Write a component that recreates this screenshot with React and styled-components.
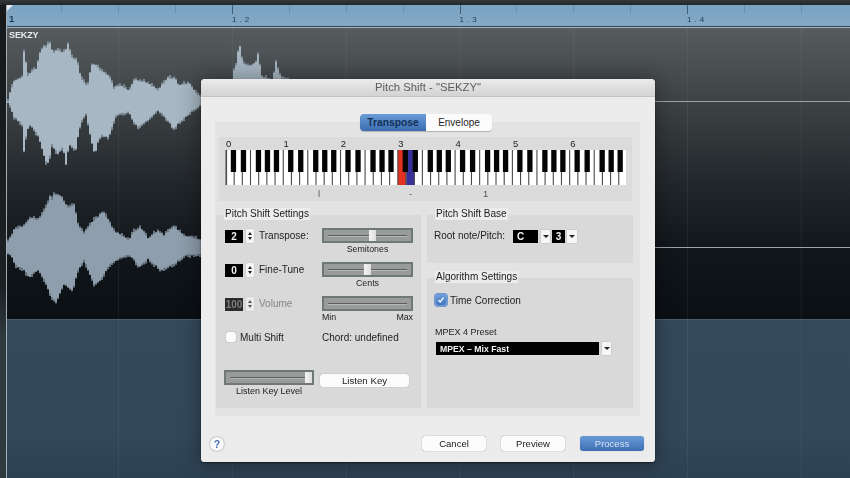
import React from "react";
import styled, { createGlobalStyle } from "styled-components";

const Global = createGlobalStyle`
  html, body { margin: 0; padding: 0; background: #1a1f22; overflow: hidden; }
  body { font-family: "Liberation Sans", Arial, sans-serif; }
  * { box-sizing: border-box; }
`;

const Page = styled.div`
  position: relative; width: 850px; height: 478px; overflow: hidden;
  display: flex; flex-direction: column; filter: blur(0.3px);
`;
const TopStrip = styled.div`height: 5px; flex: none; background: linear-gradient(#33383b, #22272a);`;
const Workspace = styled.div`flex: 1; display: flex; min-height: 0;`;
const Gutter = styled.div`width: 6px; flex: none; background: linear-gradient(#17191b 0, #1c2124 60%, #2e3a3e 70%, #2e3a3e 100%);`;
const Main = styled.div`flex: 1; display: flex; flex-direction: column; border-left: 1px solid #a4adb3; min-width: 0;`;
const Ruler = styled.div`
  height: 22px; flex: none; display: flex; overflow: hidden; position: relative;
  background: linear-gradient(#7aa2c1, #83a9c6); border-bottom: 1px solid #2c465a;
`;
const Notch = styled.i`
  position: absolute; left: 0; top: 0; width: 0; height: 0;
  border-top: 6px solid #e6edf2; border-right: 6px solid transparent;
`;
const RulerCell = styled.div`
  flex: none; width: ${p => p.$w || 56.9}px; display: flex; flex-direction: column; align-items: flex-start;
  &::before {
    content: ""; display: block; width: 1px; height: ${p => (p.$major ? 9 : 8)}px;
    background: ${p => (p.$major ? "#3d5f78" : p.$first ? "transparent" : "#6b8fab")};
  }
`;
const RulerLabel = styled.span`
  line-height: 10px; margin-top: 1px; color: #1d3a52; white-space: pre;
  font-size: ${p => (p.$bold ? 9.5 : 8)}px;
  font-weight: ${p => (p.$bold ? 700 : 400)};
  margin-left: ${p => (p.$bold ? 2 : 0)}px;
  letter-spacing: .4px;
`;
const grid = `linear-gradient(90deg, rgba(255,255,255,.05) 1px, transparent 1px) 111px 0 / 113.8px 100% repeat-x`;
const WaveLane = styled.div`
  height: 292px; flex: none; position: relative; border-top: 1px solid #aeb4b8;
  background: ${grid}, linear-gradient(#565b5e 0%, #3e4346 25%, #23282c 52%, #12171b 75%, #0a0f14 100%);
`;
const ClipName = styled.span`
  position: absolute; left: 2px; top: 1px; font-size: 9px; font-weight: 700; line-height: 12px;
  color: #e8ecee; letter-spacing: -.1px;
`;
const WaveSvg = styled.svg`display: block; width: 843px; height: 291px;`;
const EmptyLane = styled.div`
  flex: 1; border-top: 1px solid #4c5e6c;
  background: ${grid}, linear-gradient(#344a5b, #33495a 70%, #2c4152);
`;

/* dialog */
const Dialog = styled.div`
  position: absolute; left: 201px; top: 79px; width: 454px; height: 383px;
  background: #ececec; border-radius: 4px 4px 3px 3px; display: flex; flex-direction: column;
  box-shadow: 0 0 22px 2px rgba(0,0,0,.32), 0 1px 2px rgba(0,0,0,.5);
  color: #222;
`;
const TitleBar = styled.div`
  height: 18px; flex: none; display: flex; align-items: center; justify-content: center;
  background: linear-gradient(#ebebeb, #d3d3d3); border-bottom: 1px solid #c4c4c4;
  border-radius: 4px 4px 0 0; font-size: 11.3px; color: #5c5c5c; padding-bottom: 1px;
`;
const Content = styled.div`flex: 1; display: flex; flex-direction: column; padding: 17px 11px 0 14px;`;
const Tabs = styled.div`
  display: flex; height: 17px; margin-left: 145px; margin-bottom: -9px; position: relative; z-index: 1;
  width: 132px; border-radius: 4px; box-shadow: 0 1px 1px rgba(0,0,0,.22);
`;
const Tab = styled.div`
  width: 66px; display: flex; align-items: center; justify-content: center;
  font-size: ${p => (p.$active ? 10.3 : 10)}px;
  font-weight: ${p => (p.$active ? 700 : 400)};
  color: ${p => (p.$active ? "#123058" : "#1f1f1f")};
  background: ${p => (p.$active ? "linear-gradient(#6b9bd8,#3a6cae)" : "#fbfbfb")};
  border-radius: ${p => (p.$active ? "4px 0 0 4px" : "0 4px 4px 0")};
`;
const Frame = styled.div`
  width: 425px; height: 294px; background: #e3e3e3; padding: 15px 7px 8px 1px;
  display: flex; flex-direction: column;
`;
const KeyPanel = styled.div`
  height: 64px; width: 413px; margin-left: 3px; background: #dbdbdb; padding-left: 6px; flex: none;
`;
const OctaveRow = styled.div`display: flex; height: 13px; padding-left: 1px; padding-top: 1px;`;
const Octave = styled.span`width: 57.4px; flex: none; font-size: 9.5px; line-height: 11px; color: #222;`;
const KeySvg = styled.svg`display: block; width: 402px; height: 35px;`;
const MarkRow = styled.div`display: flex; padding-left: 93px; height: 16px; align-items: center;`;
const Mark = styled.span`width: ${p => p.$w}px; flex: none; font-size: 9.5px; color: #555;`;

const Columns = styled.div`display: flex; gap: 6px; margin-top: 14px; flex: 1; min-height: 0;`;
const Panel = styled.section`
  background: #d9d9d9; display: flex; flex-direction: column; width: ${p => p.$w || 206}px;
  flex: ${p => (p.$grow ? 1 : "none")}; height: ${p => (p.$h ? p.$h + "px" : "auto")};
`;
const Stack = styled.div`display: flex; flex-direction: column; gap: 15px; width: 206px;`;
const Legend = styled.div`
  align-self: flex-start; margin: -7px 0 0 8px; height: 12px; line-height: 12px; padding: 0 1px;
  background: #ececec; font-size: 10px; color: #1b1b1b; white-space: nowrap;
`;
const ControlRow = styled.div`
  display: flex; align-items: flex-start; height: 34px; padding-left: 9px; flex: none;
  margin-top: ${p => p.$mt || 0}px;
`;
const Value = styled.div`
  width: ${p => p.$w}px; height: 13px; flex: none; background: ${p => (p.$dim ? "#2b2b2b" : "#000")};
  color: ${p => (p.$dim ? "#7d7d7d" : "#f2f2f2")}; font-size: ${p => p.$fs || 10}px; font-weight: 700;
  display: flex; align-items: center; justify-content: ${p => (p.$left ? "flex-start" : "center")};
  padding-left: ${p => (p.$left ? 4 : 0)}px; margin: 2px 0 0 ${p => p.$ml || 0}px;
  white-space: nowrap;
`;
const Stepper = styled.div`
  width: 8px; height: 14px; margin: 1px 0 0 3px; flex: none; background: #f4f4f4; border-radius: 1px;
  display: flex; flex-direction: column; align-items: center; justify-content: space-around;
  box-shadow: 0 0 1px rgba(0,0,0,.35); padding: 2px 0; opacity: ${p => (p.$dim ? .7 : 1)};
`;
const Caret = styled.i`
  width: 0; height: 0; display: block;
  border-left: ${p => (p.$big ? 3 : 2.5)}px solid transparent; border-right: ${p => (p.$big ? 3 : 2.5)}px solid transparent;
  ${p => (p.$up ? "border-bottom: 3px solid #222;" : "border-top: 3px solid #222;")}
`;
const DropArrow = styled.div`
  width: ${p => p.$w}px; height: 13px; margin: 2px 0 0 ${p => p.$ml}px; flex: none; background: #f6f6f6;
  display: flex; align-items: center; justify-content: center; box-shadow: 0 0 1px rgba(0,0,0,.3);
`;
const RowLabel = styled.span`
  width: ${p => p.$w}px; margin-left: ${p => p.$ml || 0}px; flex: none; font-size: 10px; line-height: 15px; white-space: nowrap;
  color: ${p => (p.$dim ? "#858585" : "#222")};
`;
const SliderBlock = styled.div`width: ${p => p.$w}px; flex: none; display: flex; flex-direction: column;`;
const SliderTrack = styled.div`
  position: relative; height: 15px; border: 2px solid #6f7879; background: #9a9c9c;
  &::after { content: ""; position: absolute; left: 4px; right: 4px; top: 5px; height: 1px; background: #5c5f5f; box-shadow: 0 1px 0 #b6b8b8; }
`;
const Thumb = styled.div`
  position: absolute; z-index: 1; left: ${p => p.$left}px; top: 0; width: 7px; height: 11px;
  background: linear-gradient(90deg, #f4f4f4, #dedede);
`;
const Caption = styled.div`font-size: ${p => p.$fs || 8.8}px; line-height: 12px; text-align: center; color: #222; white-space: nowrap;`;
const MinMax = styled.div`display: flex; justify-content: space-between; font-size: 8.8px; line-height: 12px; color: #222;`;
const CheckRow = styled.div`
  display: flex; align-items: center; height: 12px; flex: none; margin-top: ${p => p.$mt}px; padding-left: ${p => p.$pl}px;
`;
const Check = styled.div`
  width: 10px; height: 10px; flex: none; border-radius: 2px;
  background: ${p => (p.$on ? "linear-gradient(#6b9bdc,#3f74bd)" : "#fbfbfb")};
  box-shadow: ${p => (p.$on ? "0 0 0 2px #6f97d0" : "0 0 1px rgba(0,0,0,.5)")};
  display: flex; align-items: center; justify-content: center;
`;
const ListenRow = styled.div`display: flex; align-items: flex-start; margin-top: 27px; padding-left: 8px;`;
const ListenButton = styled.div`
  width: 89px; height: 13px; margin: 4px 0 0 6px; background: #fbfbfb; border-radius: 3px; flex: none;
  font-size: 9.7px; line-height: 13px; text-align: center; color: #222; box-shadow: 0 0 1px rgba(0,0,0,.4);
`;
const RootRow = styled.div`display: flex; align-items: flex-start; padding: 8px 0 0 7px; height: 36px;`;
const PresetLabel = styled.div`font-size: 9px; line-height: 12px; margin: 20px 0 2px 8px; color: #222;`;
const PresetRow = styled.div`display: flex; padding-left: 9px;`;
const Footer = styled.div`display: flex; align-items: flex-start; margin: 20px 0 0 -5px; flex: none;`;
const Help = styled.div`
  width: 14px; height: 14px; border-radius: 50%; background: #fbfbfb; box-shadow: 0 0 1.5px rgba(0,0,0,.55);
  color: #4a6fb0; font-size: 10.5px; font-weight: 700; line-height: 14px; text-align: center; margin-top: 1px;
`;
const Buttons = styled.div`margin-left: auto; display: flex; gap: 15px;`;
const Button = styled.div`
  width: 64px; height: 15px; border-radius: 3px; font-size: 9.5px; line-height: 15px; text-align: center;
  color: ${p => (p.$primary ? "#d6e2f1" : "#222")};
  background: ${p => (p.$primary ? "linear-gradient(#6a9ad8,#3e6fb2)" : "#fbfbfb")};
  box-shadow: ${p => (p.$primary ? "0 0 1px rgba(0,0,0,.3)" : "0 0 1px rgba(0,0,0,.6)")};
`;

/* waveform data (page coordinates) */
const env = {
  t1: [[7,98],[8,92],[13,78],[20,75],[22,72],[23,49],[25,60],[26,73],[32,67],[36,65],[38,52],[43,43],[46,45],[48,37],[50,44],[52,50],[57,47],[62,50],[65,47],[66,38],[69,48],[72,57],[76,57],[80,75],[86,83],[88,78],[90,62],[95,62],[100,68],[108,73],[113,85],[120,82],[128,88],[133,77],[140,78],[147,80],[157,87],[167,75],[173,75],[178,82],[188,80],[197,92],[200,93],[230,90],[232,84],[233,67],[236,60],[238,37],[240,50],[242,60],[250,63],[255,58],[257,52],[259,62],[260,73],[271,78],[273,70],[275,59],[277,66],[280,75],[292,78],[305,85]],
  b1: [[7,104],[8,106],[13,120],[20,126],[22,130],[23,155],[25,140],[28,127],[37,138],[45,165],[48,165],[51,148],[57,157],[62,150],[65,167],[68,148],[75,152],[77,140],[80,125],[85,117],[90,142],[94,158],[97,145],[100,138],[108,140],[115,118],[128,115],[133,125],[137,130],[147,123],[157,113],[167,123],[172,132],[182,122],[192,113],[200,108],[305,108]],
  t2: [[7,238],[11,232],[13,227],[23,223],[30,215],[38,217],[43,208],[47,200],[48,188],[50,198],[53,192],[60,193],[67,205],[73,202],[78,225],[83,230],[92,218],[99,212],[102,208],[108,218],[113,228],[128,237],[133,228],[140,225],[147,235],[157,228],[163,232],[173,223],[182,232],[200,237],[305,237]],
  b2: [[7,256],[11,260],[14,268],[23,273],[28,280],[37,273],[43,282],[50,300],[55,305],[63,287],[72,293],[77,273],[83,263],[93,287],[100,283],[108,268],[120,260],[130,258],[138,270],[147,262],[160,273],[173,267],[185,258],[200,258],[305,258]]
};
const lerp = (pts, x) => {
  for (let i = 1; i < pts.length; i++) {
    if (x <= pts[i][0]) {
      const [a, b] = [pts[i - 1], pts[i]];
      return a[1] + ((b[1] - a[1]) * (x - a[0])) / (b[0] - a[0] || 1);
    }
  }
  return pts[pts.length - 1][1];
};
const rnd = x => { const v = Math.sin(x * 12.9898) * 43758.5453; return v - Math.floor(v); };
const wavePath = (top, bot, inset, jitter, seed) => {
  const up = [], down = [];
  for (let x = 7; x <= 302; x += 2) {
    const r = jitter * rnd(x + seed);
    const r2 = jitter * rnd(x + seed + 77);
    const t = lerp(top, x) + inset + r;
    const b = Math.max(t + 1, lerp(bot, x) - inset - r2);
    up.push(`L${x} ${t.toFixed(1)}L${x + 2} ${t.toFixed(1)}`);
    down.unshift(`L${x + 2} ${b.toFixed(1)}L${x} ${b.toFixed(1)}`);
  }
  return "M" + up.join("").slice(1) + down.join("") + "Z";
};

function Waveform() {
  return (
    <WaveSvg viewBox="7 28 843 291">
      <line x1="7" x2="850" y1="101.5" y2="101.5" stroke="#9ea3a6" />
      <line x1="7" x2="850" y1="247.5" y2="247.5" stroke="#9ca4a9" />
      <path d={wavePath(env.t1, env.b1, 0, 3, 1)} fill="#8a9aa7" opacity=".8" />
      <path d={wavePath(env.t1, env.b1, 2.5, 1.5, 9)} fill="#a7b7c3" />
      <path d={wavePath(env.t2, env.b2, 0, 3, 31)} fill="#7d8c9a" opacity=".8" />
      <path d={wavePath(env.t2, env.b2, 2.5, 1.5, 45)} fill="#8e9eac" />
    </WaveSvg>
  );
}

const KEY_W = 401 / 49;
const BLACK_OFFSETS = [5.8, 15.8, 30.8, 39.8, 48.8];

function Keyboard() {
  const lines = Array.from({ length: 49 }, (_, i) => i);
  const blacks = [];
  for (let o = 0; o < 7; o++) BLACK_OFFSETS.forEach(f => blacks.push(o * 7 * KEY_W + f));
  return (
    <KeySvg viewBox="0 0 402 35">
      <rect x="0" y="0" width="401" height="35" fill="#fff" />
      <rect x={173} y="0" width="8.4" height="35" fill="#e4301f" />
      <rect x={181.3} y="0" width="8.6" height="35" fill="#38309a" />
      {lines.map(i => (
        <rect key={i} x={i * KEY_W + 0.4} y="0" width={i === 0 ? 1.7 : 1.1} height="35" fill="#4a4a4a" />
      ))}
      {blacks.map((x, i) => (
        <rect key={i} x={x} y="0" width="5.3" height="22" fill="#050505" />
      ))}
    </KeySvg>
  );
}

export default function App() {
  return (
    <Page>
      <Global />
      <TopStrip />
      <Workspace>
        <Gutter />
        <Main>
          <Ruler>
            <Notch />
            <RulerCell $w={54.3} $first><RulerLabel $bold>1</RulerLabel></RulerCell>
            <RulerCell />
            <RulerCell />
            <RulerCell />
            <RulerCell $major><RulerLabel>1 . 2</RulerLabel></RulerCell>
            <RulerCell />
            <RulerCell />
            <RulerCell />
            <RulerCell $major><RulerLabel>1 . 3</RulerLabel></RulerCell>
            <RulerCell />
            <RulerCell />
            <RulerCell />
            <RulerCell $major><RulerLabel>1 . 4</RulerLabel></RulerCell>
            <RulerCell />
            <RulerCell />
            <RulerCell />
          </Ruler>
          <WaveLane>
            <Waveform />
            <ClipName>SEKZY</ClipName>
          </WaveLane>
          <EmptyLane />
        </Main>
      </Workspace>

      <Dialog>
        <TitleBar>Pitch Shift - "SEKZY"</TitleBar>
        <Content>
          <Tabs>
            <Tab $active>Transpose</Tab>
            <Tab>Envelope</Tab>
          </Tabs>
          <Frame>
            <KeyPanel>
              <OctaveRow>
                {[0, 1, 2, 3, 4, 5, 6].map(n => <Octave key={n}>{n}</Octave>)}
              </OctaveRow>
              <Keyboard />
              <MarkRow>
                <Mark $w={91}>l</Mark>
                <Mark $w={74}>-</Mark>
                <Mark $w={10}>1</Mark>
              </MarkRow>
            </KeyPanel>
            <Columns>
              <Panel $w={205}>
                <Legend>Pitch Shift Settings</Legend>
                <ControlRow $mt={8}>
                  <Value $w={18}>2</Value>
                  <Stepper><Caret $up /><Caret /></Stepper>
                  <RowLabel $w={63} $ml={5}>Transpose:</RowLabel>
                  <SliderBlock $w={91}>
                    <SliderTrack><Thumb $left={45} /></SliderTrack>
                    <Caption>Semitones</Caption>
                  </SliderBlock>
                </ControlRow>
                <ControlRow>
                  <Value $w={18}>0</Value>
                  <Stepper><Caret $up /><Caret /></Stepper>
                  <RowLabel $w={63} $ml={5}>Fine-Tune</RowLabel>
                  <SliderBlock $w={91}>
                    <SliderTrack><Thumb $left={40} /></SliderTrack>
                    <Caption>Cents</Caption>
                  </SliderBlock>
                </ControlRow>
                <ControlRow>
                  <Value $w={18} $dim>100</Value>
                  <Stepper $dim><Caret $up /><Caret /></Stepper>
                  <RowLabel $w={63} $ml={5} $dim>Volume</RowLabel>
                  <SliderBlock $w={91}>
                    <SliderTrack />
                    <MinMax><span>Min</span><span>Max</span></MinMax>
                  </SliderBlock>
                </ControlRow>
                <CheckRow $mt={1} $pl={10}>
                  <Check />
                  <RowLabel $w={82} $ml={4}>Multi Shift</RowLabel>
                  <RowLabel $w={100}>Chord: undefined</RowLabel>
                </CheckRow>
                <ListenRow>
                  <SliderBlock $w={90}>
                    <SliderTrack><Thumb $left={79} /></SliderTrack>
                    <Caption $fs={9}>Listen Key Level</Caption>
                  </SliderBlock>
                  <ListenButton>Listen Key</ListenButton>
                </ListenRow>
              </Panel>
              <Stack>
                <Panel $h={48}>
                  <Legend>Pitch Shift Base</Legend>
                  <RootRow>
                    <RowLabel $w={79}>Root note/Pitch:</RowLabel>
                    <Value $w={25} $left>C</Value>
                    <DropArrow $w={9} $ml={3}><Caret $big /></DropArrow>
                    <Value $w={13} $ml={2}>3</Value>
                    <DropArrow $w={10} $ml={2}><Caret $big /></DropArrow>
                  </RootRow>
                </Panel>
                <Panel $grow>
                  <Legend>Algorithm Settings</Legend>
                  <CheckRow $mt={11} $pl={9}>
                    <Check $on>
                      <svg width="8" height="8" viewBox="0 0 8 8"><path d="M1.5 4.2 3.2 6 6.5 1.6" fill="none" stroke="#fff" strokeWidth="1.4" /></svg>
                    </Check>
                    <RowLabel $w={90} $ml={4}>Time Correction</RowLabel>
                  </CheckRow>
                  <PresetLabel>MPEX 4 Preset</PresetLabel>
                  <PresetRow>
                    <Value $w={163} $left $fs={8.7}>MPEX – Mix Fast</Value>
                    <DropArrow $w={9} $ml={3}><Caret $big /></DropArrow>
                  </PresetRow>
                </Panel>
              </Stack>
            </Columns>
          </Frame>
          <Footer>
            <Help>?</Help>
            <Buttons>
              <Button>Cancel</Button>
              <Button>Preview</Button>
              <Button $primary>Process</Button>
            </Buttons>
          </Footer>
        </Content>
      </Dialog>
    </Page>
  );
}
